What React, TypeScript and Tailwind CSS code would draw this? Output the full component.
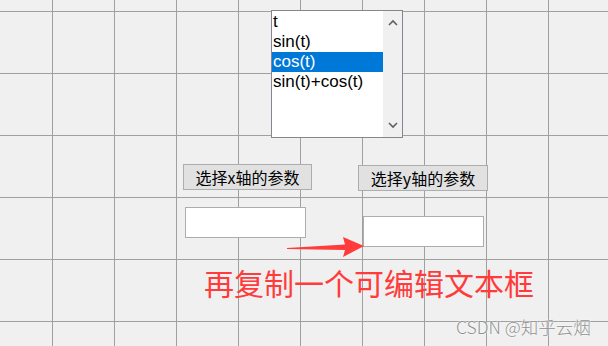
import React from "react";

const items = ["t", "sin(t)", "cos(t)", "sin(t)+cos(t)"];

function ChevronUp() {
  return (
    <svg width="10" height="7" viewBox="0 0 10 7">
      <path d="M1 6 L5 2 L9 6" fill="none" stroke="#606060" strokeWidth="1.6" />
    </svg>
  );
}
function ChevronDown() {
  return (
    <svg width="10" height="7" viewBox="0 0 10 7">
      <path d="M1 1 L5 5 L9 1" fill="none" stroke="#606060" strokeWidth="1.6" />
    </svg>
  );
}

export default function App() {
  const cjk = { fontFamily: '"Noto Sans CJK SC", "Liberation Sans", sans-serif' };
  return (
    <div
      className="relative w-[608px] h-[346px] overflow-hidden bg-[#f0f0f0] bg-[linear-gradient(to_right,#a0a0a0_1px,transparent_1px),linear-gradient(to_bottom,#a0a0a0_1px,transparent_1px)] bg-[size:62px_62px] bg-[position:52px_11px]"
    >
      {/* listbox */}
      <div className="absolute left-[271px] top-[10px] w-[132px] h-[128px] border border-[#828790] bg-white flex">
        <div className="flex-1 flex flex-col pt-[1px]" style={{ fontFamily: '"Liberation Sans", Arial, sans-serif' }}>
          {items.map((t, i) => (
            <div
              key={t}
              className={
                "h-[20px] leading-[20px] pl-[1px] text-[17px] " +
                (i === 2 ? "bg-[#0078d7] text-white" : "text-black")
              }
            >
              {t}
            </div>
          ))}
        </div>
        <div className="w-[19px] bg-[#f0f0f0] flex flex-col items-center justify-between py-[8px]">
          <ChevronUp />
          <ChevronDown />
        </div>
      </div>

      {/* buttons */}
      <button
        className="absolute left-[183px] top-[164px] w-[129px] h-[26px] bg-[#e1e1e1] border border-[#adadad] text-[16px] leading-[24px] text-black"
        style={cjk}
      >
        选择x轴的参数
      </button>
      <button
        className="absolute left-[358px] top-[165px] w-[130px] h-[26px] bg-[#e1e1e1] border border-[#adadad] text-[16px] leading-[24px] text-black"
        style={cjk}
      >
        选择y轴的参数
      </button>

      {/* edit boxes */}
      <div className="absolute left-[185px] top-[207px] w-[121px] h-[31px] bg-white border border-[#adadad]" />
      <div className="absolute left-[363px] top-[216px] w-[121px] h-[31px] bg-white border border-[#adadad]" />

      {/* arrow */}
      <svg className="absolute left-[285px] top-[234px]" width="82" height="26" viewBox="0 0 82 26">
        <path d="M2 14 L60 10.5 L58 3 L79 12 L58 23 L60 16 L2 15 Z" fill="#ff3b3b" />
      </svg>

      {/* red annotation */}
      <div
        className="absolute left-[204px] top-[263px] text-[30px] leading-[38px] text-[#ff3b3b] whitespace-nowrap"
        style={cjk}
      >
        再复制一个可编辑文本框
      </div>

      {/* watermark */}
      <div
        className="absolute left-[456px] top-[316px] text-[17.5px] leading-[22px] font-light text-[#909090] whitespace-nowrap [text-shadow:0_0_2px_#ffffff,0_0_1px_#ffffff]"
        style={cjk}
      >
        CSDN @知乎云烟
      </div>
    </div>
  );
}
